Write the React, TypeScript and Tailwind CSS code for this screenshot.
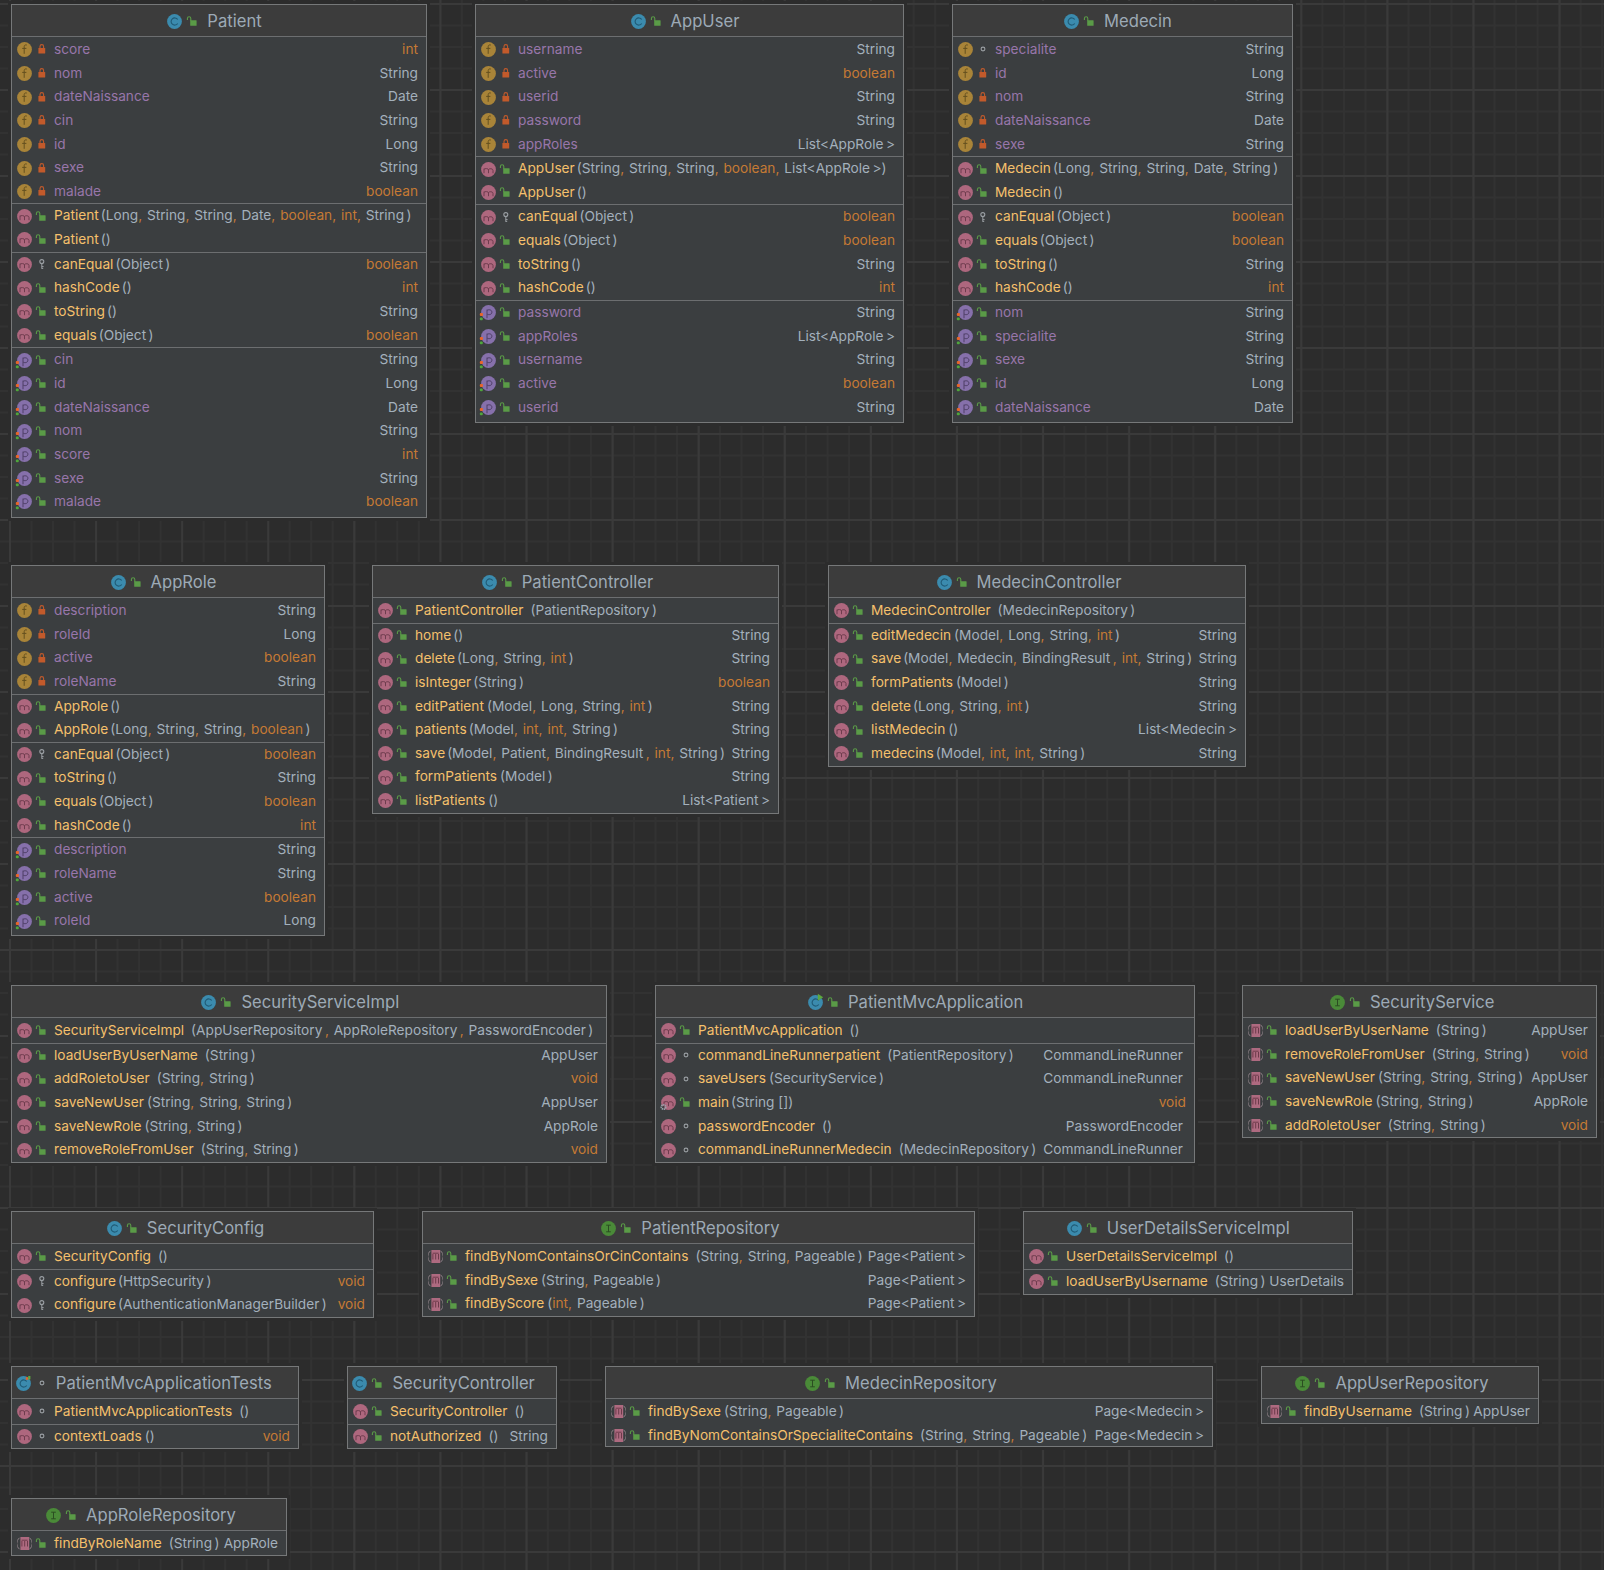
import React from 'react';

type Row = { ic: string; ac: string; n: string; p?: string; t?: string; g?: number };
type Node = { title: string; kind: string; ac: string; pos: string; sections: Row[][] };

const f = (n: string, t: string, ac = 'priv'): Row => ({ ic: 'f', ac, n, t });
const m = (n: string, p: string, t = '', ac = 'pub', g = 1): Row => ({ ic: 'm', ac, n, p, t, g });
const gm = (n: string, p: string, t = '', ac = 'pub', g = 6): Row => ({ ic: 'm', ac, n, p, t, g });
const a = (n: string, p: string, t = '', g = 6): Row => ({ ic: 'a', ac: 'pub', n, p, t, g });
const pr = (n: string, t: string): Row => ({ ic: 'p', ac: 'pub', n, t });

const nodes: Node[] = [
  {
    title: 'Patient', kind: 'C', ac: 'pub', pos: 'left-[11px] top-[4px] w-[416px] h-[514px]',
    sections: [
      [f('score', 'int'), f('nom', 'String'), f('dateNaissance', 'Date'), f('cin', 'String'), f('id', 'Long'), f('sexe', 'String'), f('malade', 'boolean')],
      [m('Patient', '(Long, String, String, Date, boolean, int, String )'), m('Patient', '()')],
      [m('canEqual', '(Object )', 'boolean', 'key'), m('hashCode', '()', 'int'), m('toString', '()', 'String'), m('equals', '(Object )', 'boolean')],
      [pr('cin', 'String'), pr('id', 'Long'), pr('dateNaissance', 'Date'), pr('nom', 'String'), pr('score', 'int'), pr('sexe', 'String'), pr('malade', 'boolean')],
    ],
  },
  {
    title: 'AppUser', kind: 'C', ac: 'pub', pos: 'left-[475px] top-[4px] w-[429px] h-[419px]',
    sections: [
      [f('username', 'String'), f('active', 'boolean'), f('userid', 'String'), f('password', 'String'), f('appRoles', 'List<AppRole >')],
      [m('AppUser', '(String, String, String, boolean, List<AppRole >)'), m('AppUser', '()')],
      [m('canEqual', '(Object )', 'boolean', 'key'), m('equals', '(Object )', 'boolean'), m('toString', '()', 'String'), m('hashCode', '()', 'int')],
      [pr('password', 'String'), pr('appRoles', 'List<AppRole >'), pr('username', 'String'), pr('active', 'boolean'), pr('userid', 'String')],
    ],
  },
  {
    title: 'Medecin', kind: 'C', ac: 'pub', pos: 'left-[952px] top-[4px] w-[341px] h-[419px]',
    sections: [
      [f('specialite', 'String', 'pkg'), f('id', 'Long'), f('nom', 'String'), f('dateNaissance', 'Date'), f('sexe', 'String')],
      [m('Medecin', '(Long, String, String, Date, String )'), m('Medecin', '()')],
      [m('canEqual', '(Object )', 'boolean', 'key'), m('equals', '(Object )', 'boolean'), m('toString', '()', 'String'), m('hashCode', '()', 'int')],
      [pr('nom', 'String'), pr('specialite', 'String'), pr('sexe', 'String'), pr('id', 'Long'), pr('dateNaissance', 'Date')],
    ],
  },
  {
    title: 'AppRole', kind: 'C', ac: 'pub', pos: 'left-[11px] top-[565px] w-[314px] h-[371px]',
    sections: [
      [f('description', 'String'), f('roleId', 'Long'), f('active', 'boolean'), f('roleName', 'String')],
      [m('AppRole', '()'), m('AppRole', '(Long, String, String, boolean )')],
      [m('canEqual', '(Object )', 'boolean', 'key'), m('toString', '()', 'String'), m('equals', '(Object )', 'boolean'), m('hashCode', '()', 'int')],
      [pr('description', 'String'), pr('roleName', 'String'), pr('active', 'boolean'), pr('roleId', 'Long')],
    ],
  },
  {
    title: 'PatientController', kind: 'C', ac: 'pub', pos: 'left-[372px] top-[565px] w-[407px] h-[249px]',
    sections: [
      [gm('PatientController', '(PatientRepository )')],
      [m('home', '()', 'String'), m('delete', '(Long, String, int )', 'String'), m('isInteger', '(String )', 'boolean'), gm('editPatient', '(Model, Long, String, int )', 'String', 'pub', 3), m('patients', '(Model, int, int, String )', 'String'), m('save', '(Model, Patient, BindingResult , int, String )', 'String'), gm('formPatients', '(Model )', 'String', 'pub', 3), gm('listPatients', '()', 'List<Patient >', 'pub', 3)],
    ],
  },
  {
    title: 'MedecinController', kind: 'C', ac: 'pub', pos: 'left-[828px] top-[565px] w-[418px] h-[202px]',
    sections: [
      [gm('MedecinController', '(MedecinRepository )')],
      [gm('editMedecin', '(Model, Long, String, int )', 'String', 'pub', 3), m('save', '(Model, Medecin, BindingResult , int, String )', 'String'), gm('formPatients', '(Model )', 'String', 'pub', 3), m('delete', '(Long, String, int )', 'String'), gm('listMedecin', '()', 'List<Medecin >', 'pub', 3), m('medecins', '(Model, int, int, String )', 'String')],
    ],
  },
  {
    title: 'SecurityServiceImpl', kind: 'C', ac: 'pub', pos: 'left-[11px] top-[985px] w-[596px] h-[178px]',
    sections: [
      [gm('SecurityServiceImpl', '(AppUserRepository , AppRoleRepository , PasswordEncoder )')],
      [gm('loadUserByUserName', '(String )', 'AppUser'), gm('addRoletoUser', '(String, String )', 'void'), gm('saveNewUser', '(String, String, String )', 'AppUser', 'pub', 3), gm('saveNewRole', '(String, String )', 'AppRole', 'pub', 3), gm('removeRoleFromUser', '(String, String )', 'void')],
    ],
  },
  {
    title: 'PatientMvcApplication', kind: 'S', ac: 'pub', pos: 'left-[655px] top-[985px] w-[540px] h-[178px]',
    sections: [
      [gm('PatientMvcApplication', '()')],
      [gm('commandLineRunnerpatient', '(PatientRepository )', 'CommandLineRunner', 'pkg'), m('saveUsers', '(SecurityService )', 'CommandLineRunner', 'pkg', 3), { ...m('main', '(String [])', 'void'), ic: 'g' }, gm('passwordEncoder', '()', 'PasswordEncoder', 'pkg'), gm('commandLineRunnerMedecin', '(MedecinRepository )', 'CommandLineRunner', 'pkg')],
    ],
  },
  {
    title: 'SecurityService', kind: 'I', ac: 'pub', pos: 'left-[1242px] top-[985px] w-[355px] h-[153px]',
    sections: [
      [a('loadUserByUserName', '(String )', 'AppUser'), a('removeRoleFromUser', '(String, String )', 'void'), a('saveNewUser', '(String, String, String )', 'AppUser', 3), a('saveNewRole', '(String, String )', 'AppRole', 3), a('addRoletoUser', '(String, String )', 'void')],
    ],
  },
  {
    title: 'SecurityConfig', kind: 'C', ac: 'pub', pos: 'left-[11px] top-[1211px] w-[363px] h-[107px]',
    sections: [
      [gm('SecurityConfig', '()')],
      [m('configure', '(HttpSecurity )', 'void', 'key'), m('configure', '(AuthenticationManagerBuilder )', 'void', 'key')],
    ],
  },
  {
    title: 'PatientRepository', kind: 'I', ac: 'pub', pos: 'left-[422px] top-[1211px] w-[553px] h-[106px]',
    sections: [
      [a('findByNomContainsOrCinContains', '(String, String, Pageable )', 'Page<Patient >'), a('findBySexe', '(String, Pageable )', 'Page<Patient >', 3), a('findByScore', '(int, Pageable )', 'Page<Patient >', 3)],
    ],
  },
  {
    title: 'UserDetailsServiceImpl', kind: 'C', ac: 'pub', pos: 'left-[1023px] top-[1211px] w-[330px] h-[84px]',
    sections: [
      [gm('UserDetailsServiceImpl', '()')],
      [gm('loadUserByUsername', '(String )', 'UserDetails')],
    ],
  },
  {
    title: 'PatientMvcApplicationTests', kind: 'T', ac: 'pkg', pos: 'left-[11px] top-[1366px] w-[288px] h-[83px]',
    sections: [
      [gm('PatientMvcApplicationTests', '()', '', 'pkg')],
      [m('contextLoads', '()', 'void', 'pkg', 3)],
    ],
  },
  {
    title: 'SecurityController', kind: 'C', ac: 'pub', pos: 'left-[347px] top-[1366px] w-[210px] h-[83px]',
    sections: [
      [gm('SecurityController', '()')],
      [gm('notAuthorized', '()', 'String')],
    ],
  },
  {
    title: 'MedecinRepository', kind: 'I', ac: 'pub', pos: 'left-[605px] top-[1366px] w-[608px] h-[81px]',
    sections: [
      [a('findBySexe', '(String, Pageable )', 'Page<Medecin >', 3), a('findByNomContainsOrSpecialiteContains', '(String, String, Pageable )', 'Page<Medecin >')],
    ],
  },
  {
    title: 'AppUserRepository', kind: 'I', ac: 'pub', pos: 'left-[1261px] top-[1366px] w-[278px] h-[58px]',
    sections: [[a('findByUsername', '(String )', 'AppUser')]],
  },
  {
    title: 'AppRoleRepository', kind: 'I', ac: 'pub', pos: 'left-[11px] top-[1498px] w-[276px] h-[58px]',
    sections: [[a('findByRoleName', '(String )', 'AppRole')]],
  },
];

const Svg = ({ children, w = 15, cls = '' }: { children: React.ReactNode; w?: number; cls?: string }) => (
  <svg width={w} height={15} viewBox={`0 0 ${w} 15`} fill="none" className={`shrink-0 ${cls}`}>
    {children}
  </svg>
);

function MemberIcon({ ic }: { ic: string }) {
  if (ic === 'f')
    return (
      <Svg>
        <circle cx="7.5" cy="7.5" r="7.4" fill="#a98438" />
        <path d="M9.8 3c-1.6-.4-2.6.2-2.6 1.6v7.2M5.2 6.4h4.2" stroke="#64501f" strokeWidth="1" />
      </Svg>
    );
  if (ic === 'm' || ic === 'g')
    return (
      <Svg cls={ic === 'g' ? 'overflow-visible' : ''}>
        <circle cx="7.5" cy="7.5" r="7.4" fill="#ae677e" />
        <path d="M3 11.2V6.6M3 7.3c.8-1 4.5-1.1 4.5.6v3.3M7.5 7.9c0-1.7 4.5-1.6 4.5.4v2.9" stroke="#6e3c4e" strokeWidth="1" />
        {ic === 'g' && (
          <>
            <circle cx="2.5" cy="12" r="2.2" fill="none" stroke="#9aa3ab" strokeWidth="1.8" strokeDasharray="1.2 .6" />
            <circle cx="2.5" cy="12" r="1.1" fill="#3c3f41" />
          </>
        )}
      </Svg>
    );
  if (ic === 'p')
    return (
      <Svg cls="overflow-visible">
        <circle cx="7.5" cy="7.5" r="7.4" fill="#8670ab" />
        <path d="M6 13.2V4.6M6 5.6c1-1.3 4.9-1.2 4.9 1.6S7 10.2 6 8.9" stroke="#4e3f66" strokeWidth="1" />
        <rect x="-1.2" y="8" width="3.2" height="3" rx="1" fill="#e8652a" />
        <rect x="-1.2" y="12.6" width="3" height="2.6" rx="1" fill="#4fa63c" />
      </Svg>
    );
  return (
    <Svg>
      <path d="M2.4 1.8a7.4 7.4 0 0 0 0 11.4M12.6 1.8a7.4 7.4 0 0 1 0 11.4" stroke="#8b7f84" strokeWidth="1" />
      <rect x="3.4" y="1" width="8.8" height="13" fill="#ae6a80" />
      <path d="M4.6 4.2h6" stroke="#6d3a4a" strokeWidth="1" />
      <path d="M4.9 10.5V5M7.7 10.5V5M10.5 10.5V5" stroke="#6d3a4a" strokeWidth="1" />
    </Svg>
  );
}

function Access({ ac }: { ac: string }) {
  if (ac === 'priv')
    return (
      <Svg w={14}>
        <rect x="3.4" y="6" width="6.8" height="5.6" rx=".5" fill="#c25a2b" />
        <path d="M5 6.2V4.4a1.8 1.8 0 0 1 3.6 0V6.2" stroke="#c25a2b" strokeWidth="1.1" />
      </Svg>
    );
  if (ac === 'pub')
    return (
      <Svg w={14}>
        <rect x="4.2" y="6.3" width="6.4" height="5.5" rx=".4" fill="#5a9b47" />
        <path d="M1.4 6V4.4a1.7 1.7 0 0 1 3.4 0V7" stroke="#5a9b47" strokeWidth="1.1" />
      </Svg>
    );
  if (ac === 'key')
    return (
      <Svg w={14}>
        <circle cx="6.8" cy="4.6" r="2" stroke="#9a9fa3" strokeWidth="1.1" />
        <path d="M6.8 6.6v5.2M6.8 9.6h1.8M6.8 11.4h1.4" stroke="#9a9fa3" strokeWidth="1" />
      </Svg>
    );
  return (
    <Svg w={14}>
      <circle cx="7" cy="7" r="1.9" stroke="#9a9fa3" strokeWidth="1.1" />
    </Svg>
  );
}

function TitleIcon({ kind }: { kind: string }) {
  if (kind === 'I')
    return (
      <Svg>
        <circle cx="7.5" cy="7.5" r="7.4" fill="#4a8a38" />
        <path d="M5.2 4.2h4.6M7.5 4.2v6.6M5.2 10.8h4.6" stroke="#2b4d22" strokeWidth="1" />
      </Svg>
    );
  return (
    <Svg cls="overflow-visible">
      <circle cx="7.5" cy="7.5" r="7.4" fill="#3b8bae" />
      <path d="M10.7 5.5a3.6 3.6 0 1 0 0 4" stroke="#205a75" strokeWidth="1.1" />
      {kind === 'S' && <path d="M9.8 -1.2v7l5.4-3.5z" fill="#5da83f" />}
      {kind === 'T' && (
        <>
          <rect x="9.8" y="1.2" width="2.4" height="2.6" fill="#e0652c" />
          <rect x="12.2" y="0" width="2.2" height="3.4" fill="#5da83f" />
        </>
      )}
    </Svg>
  );
}

const thin = (s: string) => s.replace(/ \)/g, '\u2009)').replace(/ >/g, '\u2009>').replace(/ ,/g, '\u2009,');

function Params({ s }: { s: string }) {
  const parts = thin(s).split(/(,|\bint\b|\bboolean\b)/);
  return (
    <span className="text-[#a3b0bc] whitespace-pre">
      {parts.map((x, i) =>
        x === ',' ? (
          <span key={i} className="text-[#c57a34] mr-[1px]">
            {x}
          </span>
        ) : x === 'int' || x === 'boolean' ? (
          <span key={i} className="text-[#c57a34]">
            {x}
          </span>
        ) : (
          <span key={i}>{x}</span>
        ),
      )}
    </span>
  );
}

function MemberRow({ r }: { r: Row }) {
  const kw = r.t === 'int' || r.t === 'boolean' || r.t === 'void';
  const inset = r.t === 'CommandLineRunner' || r.t === 'PasswordEncoder';
  return (
    <div className="flex items-center h-[23.65px] pl-[5px] pr-[8px]">
      <MemberIcon ic={r.ic} />
      <span className="ml-[3px] flex">
        <Access ac={r.ac} />
      </span>
      <span className={`ml-[5px] whitespace-pre ${r.p !== undefined ? 'text-[#f5c06c]' : 'text-[#9876aa]'}`}>{r.n}</span>
      {r.p !== undefined && (
        <span className={r.g === 6 ? 'ml-[7px]' : r.g === 3 ? 'ml-[3px]' : 'ml-[2px]'}>
          <Params s={r.p} />
        </span>
      )}
      {r.t && (
        <span className={`ml-auto whitespace-pre ${inset ? 'mr-[3px]' : ''} ${kw ? 'text-[#c57a34]' : 'text-[#a3b0bc]'}`}>{thin(r.t)}</span>
      )}
    </div>
  );
}

function Diagram({ n }: { n: Node }) {
  const extra = Math.max(0, n.title.length - 7) * 0.7;
  return (
    <div className={`absolute ${n.pos} border border-[#767879] bg-[#3b3e40] shadow-[0_0_0_3px_#2c2c2c]`}>
      <div className="flex items-center justify-center h-[30.5px] pt-[2px] bg-[#3c3c3c]" style={{ paddingRight: 9 + extra }}>
        <TitleIcon kind={n.kind} />
        <span className="ml-[4px] flex">
          <Access ac={n.ac} />
        </span>
        <span className="ml-[7px] text-[16.6px] text-[#9daab6] whitespace-pre">{n.title}</span>
      </div>
      {n.sections.map((s, i) => (
        <div key={i} className={`border-t border-[#6c6e70] ${i === 0 ? 'pt-[1.5px]' : ''}`}>
          {s.map((r, j) => (
            <MemberRow key={j} r={r} />
          ))}
        </div>
      ))}
    </div>
  );
}

export default function App() {
  return (
    <div className="relative w-[1604px] h-[1570px] overflow-hidden bg-[#2c2c2c] bg-[linear-gradient(to_right,#3a3a3a_2px,transparent_2px),linear-gradient(to_bottom,#3a3a3a_2px,transparent_2px),linear-gradient(to_right,#323232_2px,transparent_2px),linear-gradient(to_bottom,#323232_2px,transparent_2px)] bg-[size:86.1px_86px,86.1px_86px,21.525px_21.5px,21.525px_21.5px] bg-[position:9px_3px,9px_3px,9px_3px,9px_3px] font-['Inter','Liberation_Sans',sans-serif] text-[13.7px] leading-none">
      {nodes.map((n) => (
        <Diagram key={n.title} n={n} />
      ))}
    </div>
  );
}
